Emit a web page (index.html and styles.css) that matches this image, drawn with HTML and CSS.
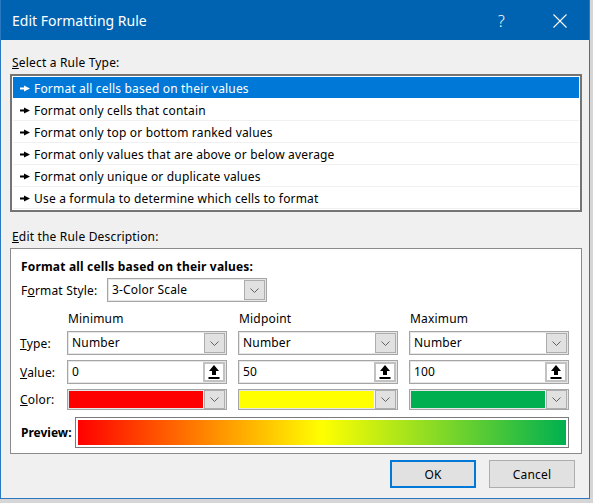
FILE: index.html
```html
<!DOCTYPE html>
<html>
<head>
<meta charset="utf-8">
<link rel="stylesheet" href="styles.css">
</head>
<body>
<div class="window">
  <div class="titlebar">
    <span class="title">Edit Formatting Rule</span>
    <span class="help">?</span>
    <span class="close"><svg width="14" height="14" viewBox="0 0 14 14"><path d="M0.5 0.5L13.5 13.5M13.5 0.5L0.5 13.5" stroke="#fff" stroke-width="1.1" fill="none"/></svg></span>
  </div>
  <div class="content">
    <div class="label label-top"><u>S</u>elect a Rule Type:</div>
    <div class="listbox">
      <div class="item selected"><svg class="arrow" width="10" height="7" viewBox="0 0 10 7"><path d="M0 2.5h4v2H0z M4 0.5L10 3.5L4 6.5z"/></svg>Format all cells based on their values</div>
      <div class="item"><svg class="arrow" width="10" height="7" viewBox="0 0 10 7"><path d="M0 2.5h4v2H0z M4 0.5L10 3.5L4 6.5z"/></svg>Format only cells that contain</div>
      <div class="item"><svg class="arrow" width="10" height="7" viewBox="0 0 10 7"><path d="M0 2.5h4v2H0z M4 0.5L10 3.5L4 6.5z"/></svg>Format only top or bottom ranked values</div>
      <div class="item"><svg class="arrow" width="10" height="7" viewBox="0 0 10 7"><path d="M0 2.5h4v2H0z M4 0.5L10 3.5L4 6.5z"/></svg>Format only values that are above or below average</div>
      <div class="item"><svg class="arrow" width="10" height="7" viewBox="0 0 10 7"><path d="M0 2.5h4v2H0z M4 0.5L10 3.5L4 6.5z"/></svg>Format only unique or duplicate values</div>
      <div class="item"><svg class="arrow" width="10" height="7" viewBox="0 0 10 7"><path d="M0 2.5h4v2H0z M4 0.5L10 3.5L4 6.5z"/></svg>Use a formula to determine which cells to format</div>
    </div>
    <div class="label label-desc"><u>E</u>dit the Rule Description:</div>
    <div class="desc">
      <div class="desc-title">Format all cells based on their values:</div>
      <div class="style-row">
        <span class="style-label">F<u>o</u>rmat Style:</span>
        <div class="combo style-combo">
          <span class="combo-text">3-Color Scale</span>
          <span class="dd"><svg width="9" height="5" viewBox="0 0 9 5"><path d="M0.5 0.5L4.5 4.5L8.5 0.5" stroke="#606060" fill="none"/></svg></span>
        </div>
      </div>
      <div class="grid">
        <div></div>
        <div class="colhead">Minimum</div>
        <div class="colhead">Midpoint</div>
        <div class="colhead">Maximum</div>

        <div class="rowlabel"><u>T</u>ype:</div>
        <div class="combo"><span class="combo-text">Number</span><span class="dd"><svg width="9" height="5" viewBox="0 0 9 5"><path d="M0.5 0.5L4.5 4.5L8.5 0.5" stroke="#606060" fill="none"/></svg></span></div>
        <div class="combo"><span class="combo-text">Number</span><span class="dd"><svg width="9" height="5" viewBox="0 0 9 5"><path d="M0.5 0.5L4.5 4.5L8.5 0.5" stroke="#606060" fill="none"/></svg></span></div>
        <div class="combo"><span class="combo-text">Number</span><span class="dd"><svg width="9" height="5" viewBox="0 0 9 5"><path d="M0.5 0.5L4.5 4.5L8.5 0.5" stroke="#606060" fill="none"/></svg></span></div>

        <div class="rowlabel"><u>V</u>alue:</div>
        <div class="combo input"><span class="combo-text">0</span><span class="up"><svg width="12" height="14" viewBox="0 0 12 14"><path d="M6 0L11 6H8V10H4V6H1Z M0.5 12h11v2h-11z" fill="#000"/></svg></span></div>
        <div class="combo input"><span class="combo-text">50</span><span class="up"><svg width="12" height="14" viewBox="0 0 12 14"><path d="M6 0L11 6H8V10H4V6H1Z M0.5 12h11v2h-11z" fill="#000"/></svg></span></div>
        <div class="combo input"><span class="combo-text">100</span><span class="up"><svg width="12" height="14" viewBox="0 0 12 14"><path d="M6 0L11 6H8V10H4V6H1Z M0.5 12h11v2h-11z" fill="#000"/></svg></span></div>

        <div class="rowlabel"><u>C</u>olor:</div>
        <div class="combo color"><span class="swatch red"></span><span class="dd"><svg width="9" height="5" viewBox="0 0 9 5"><path d="M0.5 0.5L4.5 4.5L8.5 0.5" stroke="#606060" fill="none"/></svg></span></div>
        <div class="combo color"><span class="swatch yellow"></span><span class="dd"><svg width="9" height="5" viewBox="0 0 9 5"><path d="M0.5 0.5L4.5 4.5L8.5 0.5" stroke="#606060" fill="none"/></svg></span></div>
        <div class="combo color"><span class="swatch green"></span><span class="dd"><svg width="9" height="5" viewBox="0 0 9 5"><path d="M0.5 0.5L4.5 4.5L8.5 0.5" stroke="#606060" fill="none"/></svg></span></div>
      </div>
      <div class="preview-row">
        <span class="preview-label">Preview:</span>
        <div class="preview"><div class="gradient"></div></div>
      </div>
    </div>
    <div class="buttons">
      <div class="btn ok">OK</div>
      <div class="btn">Cancel</div>
    </div>
  </div>
</div>
</body>
</html>
```

FILE: styles.css
```css
html, body {
  margin: 0;
  padding: 0;
}
body {
  background: #d6d6d6;
  font-family: "Noto Sans", "Open Sans", sans-serif;
  font-size: 12px;
  letter-spacing: 0.18px;
  color: #000;
  width: 593px;
  height: 503px;
  overflow: hidden;
}
.window {
  width: 590px;
  height: 499px;
  box-sizing: border-box;
  border: 1px solid #2b78c2;
  border-top: none;
  background: #f0f0f0;
  display: flex;
  flex-direction: column;
}
.titlebar {
  height: 40px;
  flex: none;
  background: #0063b1;
  color: #fff;
  display: flex;
  align-items: center;
  padding-left: 11px;
  box-sizing: border-box;
  letter-spacing: 0;
}
.title {
  font-size: 14px;
  flex: 1;
  margin-top: 1px;
}
.help {
  font-size: 16px;
  width: 12px;
  margin-right: 43px;
  font-weight: 300;
  margin-top: 1px;
}
.close {
  display: flex;
  margin-right: 22px;
  margin-top: 1px;
}
.content {
  padding: 15px 7px 0 9px;
  display: flex;
  flex-direction: column;
}
.label {
  height: 16px;
  line-height: 16px;
  padding-left: 2px;
}
.label-top {
  margin-bottom: 3px;
}
.label-desc {
  margin-top: 17px;
  margin-bottom: 3px;
}
.listbox {
  border: 2px solid #747474;
  background: #fff;
  padding: 1px;
}
.item {
  height: 21px;
  line-height: 21px;
  border-bottom: 1px solid #f0f0f0;
  padding-left: 7px;
  padding-top: 1px;
  box-sizing: border-box;
  height: 22px;
  display: flex;
  align-items: center;
  white-space: nowrap;
}
.item .arrow {
  fill: #000;
  margin-right: 4px;
  flex: none;
}
.item.selected {
  background: #0078d7;
  color: #fff;
  border-bottom-color: #fff;
}
.item.selected .arrow {
  fill: #fff;
}
.desc {
  border: 1px solid #8a8a8a;
  background: #fff;
  padding: 10px 0 5px 10px;
}
.desc-title {
  font-weight: bold;
  height: 16px;
  line-height: 16px;
}
.style-row {
  margin-top: 3px;
  display: flex;
  align-items: center;
}
.style-label {
  width: 86px;
}
.combo {
  width: 160px;
  height: 24px;
  box-sizing: border-box;
  border: 1px solid #a5a5a5;
  box-shadow: inset 0 0 0 1px #e6e6e6;
  background: #fff;
  display: flex;
  align-items: center;
  padding: 1px;
}
.combo-text {
  flex: 1;
  padding-left: 3px;
  line-height: 20px;
}
.dd {
  width: 21px;
  height: 20px;
  box-sizing: border-box;
  background: #e1e1e1;
  border: 1px solid #adadad;
  display: flex;
  align-items: center;
  justify-content: center;
  flex: none;
}
.grid {
  margin-top: 10px;
  display: grid;
  grid-template-columns: 35px 160px 160px 160px;
  grid-template-rows: 14px 24px 24px 21px;
  column-gap: 11px;
  row-gap: 5px;
  align-items: center;
}
.colhead {
  line-height: 14px;
  padding-left: 1px;
}
.rowlabel {
  margin-left: -1px;
}
.up {
  width: 22px;
  height: 20px;
  box-sizing: border-box;
  background: #fff;
  border: 2px solid #c2c2c2;
  display: flex;
  align-items: center;
  justify-content: center;
  flex: none;
}
.combo.color {
  height: 21px;
  padding: 1px;
}
.combo.color .dd {
  height: 19px;
}
.swatch {
  flex: 1;
  height: 17px;
  margin-right: 1px;
}
.swatch.red { background: #ff0000; }
.swatch.yellow { background: #ffff00; }
.swatch.green { background: #00b050; }
.preview-row {
  margin-top: 7px;
  display: flex;
  align-items: center;
}
.preview-label {
  font-weight: bold;
  width: 54px;
  letter-spacing: 0;
}
.preview {
  width: 494px;
  height: 31px;
  box-sizing: border-box;
  border: 1px solid #7a7a7a;
  padding: 2px;
  background: #fff;
}
.gradient {
  height: 100%;
  background: linear-gradient(to right, #ff0000 0%, #ffff00 50%, #00b050 100%);
}
.buttons {
  margin-top: 6px;
  display: flex;
  justify-content: flex-end;
  gap: 13px;
  padding-right: 7px;
}
.btn {
  width: 86px;
  height: 28px;
  box-sizing: border-box;
  border: 1px solid #adadad;
  background: #e1e1e1;
  display: flex;
  align-items: center;
  justify-content: center;
}
.btn.ok {
  border: 2px solid #0078d7;
}
```
